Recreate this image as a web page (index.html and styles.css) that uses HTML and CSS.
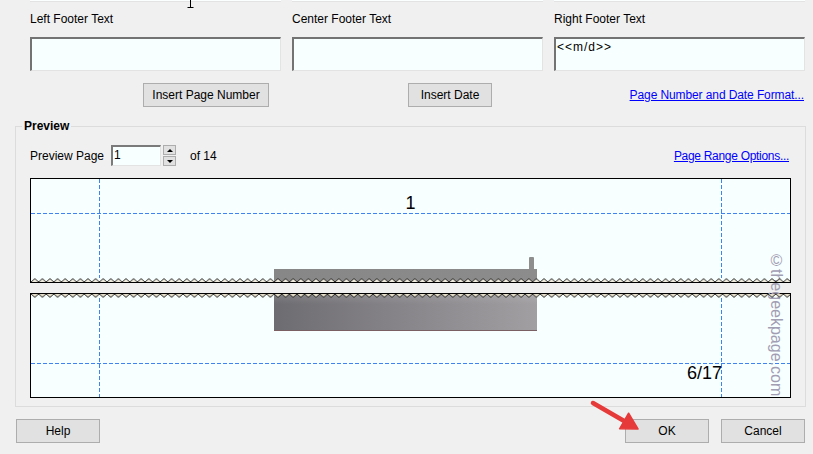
FILE: index.html
```html
<!DOCTYPE html>
<html>
<head>
<meta charset="utf-8">
<link rel="stylesheet" href="styles.css">
</head>
<body>
<div class="stub"><span></span><span></span><span></span></div>
<svg class="ibeam" width="9" height="9" viewBox="0 0 9 9"><path d="M4.5 0V7M1.5 7.5H7.5" stroke="#000" stroke-width="1" fill="none"/></svg>

<div class="footer-grid">
  <span class="lbl">Left Footer Text</span>
  <span class="lbl">Center Footer Text</span>
  <span class="lbl">Right Footer Text</span>
  <div class="tbox"></div>
  <div class="tbox"></div>
  <div class="tbox">&lt;&lt;m/d&gt;&gt;</div>
  <button class="btn btn-pn">Insert Page Number</button>
  <button class="btn btn-date">Insert Date</button>
  <a class="link link-fmt">Page Number and Date Format...</a>
</div>

<fieldset class="group">
  <legend>Preview</legend>
  <div class="prow">
    <span class="plabel">Preview Page</span>
    <div class="pinput">1</div>
    <div class="spin"><span class="up"></span><span class="down"></span></div>
    <span class="of">of 14</span>
    <a class="link link-range">Page Range Options...</a>
  </div>

  <div class="page page-top">
    <div class="guide v v1"></div>
    <div class="guide v v2"></div>
    <div class="guide h h1"></div>
    <div class="pic pic-a"></div>
    <div class="pic pic-tab"></div>
    <div class="hdr">1</div>
    <svg class="zig" height="4">
      <defs><pattern id="zt" width="7.6" height="4" patternUnits="userSpaceOnUse"><path d="M0 4L3.8 0.6L7.6 4" fill="#efebdd" stroke="#000" stroke-width="0.8"/></pattern></defs>
      <rect width="100%" height="4" fill="url(#zt)"/>
    </svg>
  </div>

  <div class="page page-bot">
    <div class="guide v v1 vb"></div>
    <div class="guide v v2 vb"></div>
    <div class="guide h h2"></div>
    <div class="pic pic-b"></div>
    <svg class="zig" height="4">
      <defs><pattern id="zb" width="7.6" height="4" patternUnits="userSpaceOnUse"><path d="M0 0L3.8 3.4L7.6 0" fill="#e3ddc9" stroke="#000" stroke-width="0.8"/></pattern></defs>
      <rect width="100%" height="4" fill="url(#zb)"/>
    </svg>
    <div class="ftr">6/17</div>
  </div>
</fieldset>

<div class="actions">
  <button class="btn help">Help</button>
  <button class="btn">OK</button>
  <button class="btn">Cancel</button>
</div>

<svg class="arrow" width="60" height="40" viewBox="0 0 60 40">
  <line x1="8" y1="7" x2="40" y2="25.5" stroke="#e63a3a" stroke-width="4.5" stroke-linecap="round"/>
  <polygon points="53,33 34.6,32.8 43.6,17.2" fill="#e63a3a" stroke="#e63a3a" stroke-width="1.5" stroke-linejoin="round"/>
</svg>
<div class="watermark">©thegeekpage.com</div>
</body>
</html>
```

FILE: styles.css
```css
* { box-sizing: border-box; }
html, body { margin: 0; }
body {
  width: 813px;
  height: 454px;
  overflow: hidden;
  position: relative;
  background: #f0f0f0;
  font-family: "Liberation Sans", Arial, sans-serif;
  font-size: 12px;
  color: #000;
}

.stub {
  display: grid;
  grid-template-columns: repeat(3, 251px);
  column-gap: 11px;
  padding-left: 30px;
  height: 2px;
}
.stub span {
  background: #fbffff;
  border-bottom: 1px solid #e3e3e3;
}
.ibeam { position: absolute; left: 186px; top: 0; }

.footer-grid {
  display: grid;
  grid-template-columns: repeat(3, 251px);
  column-gap: 11px;
  padding-left: 30px;
  margin-top: 9px;
}
.lbl { display: block; line-height: 16px; margin-bottom: 10px; }
.tbox {
  height: 34px;
  background: #f8ffff;
  border-style: solid;
  border-width: 2px 1px 1px 2px;
  border-color: #737373 #e3e3e3 #e3e3e3 #737373;
  padding: 1px 0 0 1px;
  line-height: 14px;
  letter-spacing: 1px;
}
.btn {
  height: 24px;
  font: inherit;
  color: #000;
  background: #e1e1e1;
  border: 1px solid #adadad;
  padding: 0;
}
.btn-pn { width: 126px; margin: 12px 0 0 113px; justify-self: start; }
.btn-date { width: 84px; margin: 12px 0 0 116px; justify-self: start; }
.link { color: #0000ff; text-decoration: underline; }
.link-fmt { justify-self: end; align-self: center; margin: 12px 1px 0 0; letter-spacing: -0.1px; }

.group {
  margin: 11px 7px 0 15px;
  padding: 11px 14px 8px 14px;
  border: 1px solid #dcdcdc;
  min-width: 0;
}
.group legend {
  margin-left: -8px;
  padding: 0 2px;
  font-weight: bold;
  line-height: 16px;
}
.prow { display: flex; align-items: center; height: 21px; }
.plabel { width: 81px; }
.pinput {
  width: 50px;
  height: 21px;
  background: #f8ffff;
  border-style: solid;
  border-width: 2px 1px 1px 2px;
  border-color: #7a7a7a #e3e3e3 #e3e3e3 #7a7a7a;
  padding-left: 1px;
  line-height: 17px;
}
.spin { margin-left: 2px; display: flex; flex-direction: column; gap: 1px; }
.spin span {
  width: 13px;
  height: 10px;
  background: #e1e1e1;
  border: 1px solid #adadad;
  display: flex;
  align-items: center;
  justify-content: center;
}
.spin span::after { content: ""; width: 0; height: 0; border-left: 3px solid transparent; border-right: 3px solid transparent; }
.spin .up::after { border-bottom: 3px solid #000; }
.spin .down::after { border-top: 3px solid #000; }
.of { margin-left: 14px; }
.link-range { margin-left: auto; margin-right: 2px; letter-spacing: -0.3px; }

.page {
  position: relative;
  height: 105px;
  border: 1px solid #000;
  background: #f8ffff;
  display: flex;
  flex-direction: column;
}
.page-top { margin-top: 12px; justify-content: space-between; }
.page-bot { margin-top: 10px; }

.guide { position: absolute; }
.guide.v {
  width: 1px;
  top: 0;
  height: 99px;
  background: repeating-linear-gradient(180deg, #3f83f0 0 4px, transparent 4px 6px);
}
.guide.vb { top: 4px; height: 99px; }
.guide.v1 { left: 68px; }
.guide.v2 { left: 690px; }
.guide.h {
  height: 1px;
  left: 0;
  right: 0;
  background: repeating-linear-gradient(90deg, #3f83f0 0 4px, transparent 4px 6px);
}
.guide.h1 { top: 34px; }
.guide.h2 { top: 69px; }

.pic { position: absolute; z-index: 1; }
.pic-a { left: 243px; top: 90px; width: 263px; height: 13px; background: linear-gradient(90deg, #878787, #8c8c8c); }
.pic-tab { left: 498px; top: 78px; width: 5px; height: 12px; background: #8e8e8e; border-radius: 1px 1px 0 0; }
.pic-b {
  left: 243px; top: 0; width: 263px; height: 37px;
  background: linear-gradient(180deg, rgba(255,255,255,0.12) 0, rgba(255,255,255,0) 10px),
              linear-gradient(90deg, #6d6c70 0%, #858387 45%, #a29fa3 100%);
  border-bottom: 1px solid #7a5f63;
}
.zig { display: block; width: 100%; height: 4px; position: relative; z-index: 2; flex: none; }
.hdr {
  position: relative;
  z-index: 2;
  margin: 0 69px;
  padding-top: 14px;
  text-align: center;
  font-size: 18px;
  line-height: 20px;
}
.ftr {
  position: relative;
  z-index: 2;
  margin-top: 65px;
  padding-right: 68px;
  text-align: right;
  font-size: 18px;
  line-height: 20px;
}

.actions {
  display: flex;
  gap: 12px;
  margin-top: 12px;
  padding: 0 8px 0 16px;
}
.actions .btn { width: 84px; }
.actions .help { margin-right: auto; }

.arrow { position: absolute; left: 585px; top: 396px; }
.watermark {
  position: absolute;
  left: 767px;
  top: 252px;
  writing-mode: vertical-rl;
  font-size: 16px;
  line-height: 18px;
  color: #a19db3;
}
```
